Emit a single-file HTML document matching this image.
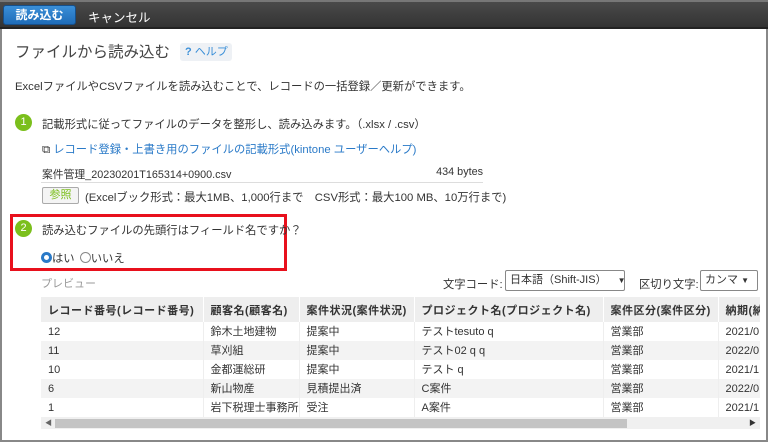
<!DOCTYPE html>
<html><head><meta charset="utf-8"><style>
*{box-sizing:border-box;margin:0;padding:0}
body{width:768px;height:442px;overflow:hidden;background:#fff;font-family:"Liberation Sans","Noto Sans CJK JP",sans-serif;color:#333;position:relative}
.top{position:absolute;left:0;top:0;width:768px;height:29px;background:linear-gradient(#4a4a4a,#333);border-top:2px solid #777;border-bottom:2px solid #222}
.btn{position:absolute;left:3px;top:3px;width:73px;height:20px;background:linear-gradient(#3a8fd8,#1f6cb8);border:1px solid #164f8a;border-radius:3px;color:#fff;font-size:12px;text-align:center;line-height:18px;font-weight:bold}
.cancel{position:absolute;left:88px;top:5px;color:#fff;font-size:12.5px}
.frame{position:absolute;left:0;top:29px;width:768px;height:413px;border-left:2px solid #888;border-right:2px solid #888;border-bottom:2px solid #888}
.abs{position:absolute;white-space:nowrap}
h1{position:absolute;left:15px;top:40px;font-size:15.5px;font-weight:normal;color:#444;white-space:nowrap}
.help{position:absolute;left:180px;top:43px;width:52px;height:18px;background:#eef1f5;border-radius:3px;font-size:11px;color:#3a8fd8;line-height:18px;padding-left:5px;white-space:nowrap}
.num{position:absolute;width:17px;height:17px;border-radius:50%;background:#7bbf1c;color:#fff;font-size:11px;text-align:center;line-height:17px}
.t{font-size:11.3px}
.red{position:absolute;left:10px;top:214px;width:277px;height:57px;border:3px solid #e8101c}
table{position:absolute;border-collapse:collapse;font-size:11px;table-layout:fixed}
th{background:#eeeeee;height:25px;text-align:left;padding-left:7px;font-weight:bold;color:#333;border-right:1px solid #fff;white-space:nowrap;overflow:hidden;letter-spacing:0.5px}
td{height:19px;line-height:18px;padding:0 0 0 7px;border-right:1px solid #eee;white-space:nowrap;overflow:hidden}
tr:nth-child(odd) td{background:#f3f3f3}
.sel{position:absolute;height:21px;border:1px solid #888;border-radius:2px;font-size:11px;line-height:19px;padding-left:4px;background:#fff;white-space:nowrap}
</style></head><body>
<div class="top"><div class="btn">読み込む</div><div class="cancel">キャンセル</div></div>
<div class="frame"></div>
<h1>ファイルから読み込む</h1>
<div class="help"><b>?</b> ヘルプ</div>
<div class="abs t" style="left:15px;top:78px">ExcelファイルやCSVファイルを読み込むことで、レコードの一括登録／更新ができます。</div>
<div class="num" style="left:15px;top:114px">1</div>
<div class="abs t" style="left:42px;top:116px">記載形式に従ってファイルのデータを整形し、読み込みます。（.xlsx / .csv）</div>
<div class="abs t" style="left:42px;top:141px;color:#2a7ac8"><span style="color:#333">⧉</span> レコード登録・上書き用のファイルの記載形式(kintone ユーザーヘルプ)</div>
<div class="abs" style="left:42px;top:166px;font-size:10.8px">案件管理_20230201T165314+0900.csv</div>
<div class="abs" style="left:434px;top:166px;width:49px;text-align:right;font-size:10.8px">434 bytes</div>
<div class="abs" style="left:41px;top:182px;width:442px;border-top:1px solid #ddd"></div>
<div class="abs" style="left:42px;top:187px;width:37px;height:17px;border:1px solid #aaa;border-radius:2px;background:#f4f4f4;color:#7bbf1c;font-size:11px;text-align:center;line-height:15px">参照</div>
<div class="abs t" style="left:85px;top:189px">(Excelブック形式：最大1MB、1,000行まで　CSV形式：最大100 MB、10万行まで)</div>
<div class="red"></div>
<div class="num" style="left:15px;top:220px">2</div>
<div class="abs t" style="left:42px;top:222px">読み込むファイルの先頭行はフィールド名ですか？</div>
<div class="abs t" style="left:41px;top:250px"><span style="display:inline-block;width:11px;height:11px;border-radius:50%;border:3px solid #2a7ac8;vertical-align:-1px"></span>はい <span style="display:inline-block;width:11px;height:11px;border-radius:50%;border:1px solid #888;vertical-align:-1px;margin-left:2px"></span>いいえ</div>
<div class="abs" style="left:41px;top:275px;font-size:11px;color:#999">プレビュー</div>
<div class="abs t" style="left:443px;top:276px">文字コード:</div>
<div class="sel" style="left:505px;top:270px;width:120px">日本語（Shift-JIS） <span style="font-size:8px;margin-left:8px">▼</span></div>
<div class="abs t" style="left:639px;top:276px">区切り文字:</div>
<div class="sel" style="left:700px;top:270px;width:58px">カンマ <span style="font-size:8px">▼</span></div>
<div style="position:absolute;left:41px;top:297px;width:719px;height:135px;overflow:hidden">
<table style="left:0;top:0;width:760px">
<colgroup><col style="width:162px"><col style="width:96px"><col style="width:115px"><col style="width:189px"><col style="width:115px"><col style="width:83px"></colgroup>
<tr><th>レコード番号(レコード番号)</th><th>顧客名(顧客名)</th><th>案件状況(案件状況)</th><th>プロジェクト名(プロジェクト名)</th><th>案件区分(案件区分)</th><th>納期(納期)</th></tr>
<tr><td>12</td><td>鈴木土地建物</td><td>提案中</td><td>テストtesuto q</td><td>営業部</td><td>2021/0</td></tr>
<tr><td>11</td><td>草刈組</td><td>提案中</td><td>テスト02 q q</td><td>営業部</td><td>2022/0</td></tr>
<tr><td>10</td><td>金都運総研</td><td>提案中</td><td>テスト q</td><td>営業部</td><td>2021/1</td></tr>
<tr><td>6</td><td>新山物産</td><td>見積提出済</td><td>C案件</td><td>営業部</td><td>2022/0</td></tr>
<tr><td>1</td><td>岩下税理士事務所</td><td>受注</td><td>A案件</td><td>営業部</td><td>2021/1</td></tr>
</table>
<div style="position:absolute;left:0;top:120px;width:719px;height:12px;background:#f0f0f0"></div>
<div style="position:absolute;left:14px;top:122px;width:572px;height:9px;background:#c4c4c4"></div>
<div style="position:absolute;left:4px;top:121px;font-size:7px;color:#666">◀</div>
<div style="position:absolute;left:708px;top:121px;font-size:7px;color:#333">▶</div>
</div>
</body></html>
